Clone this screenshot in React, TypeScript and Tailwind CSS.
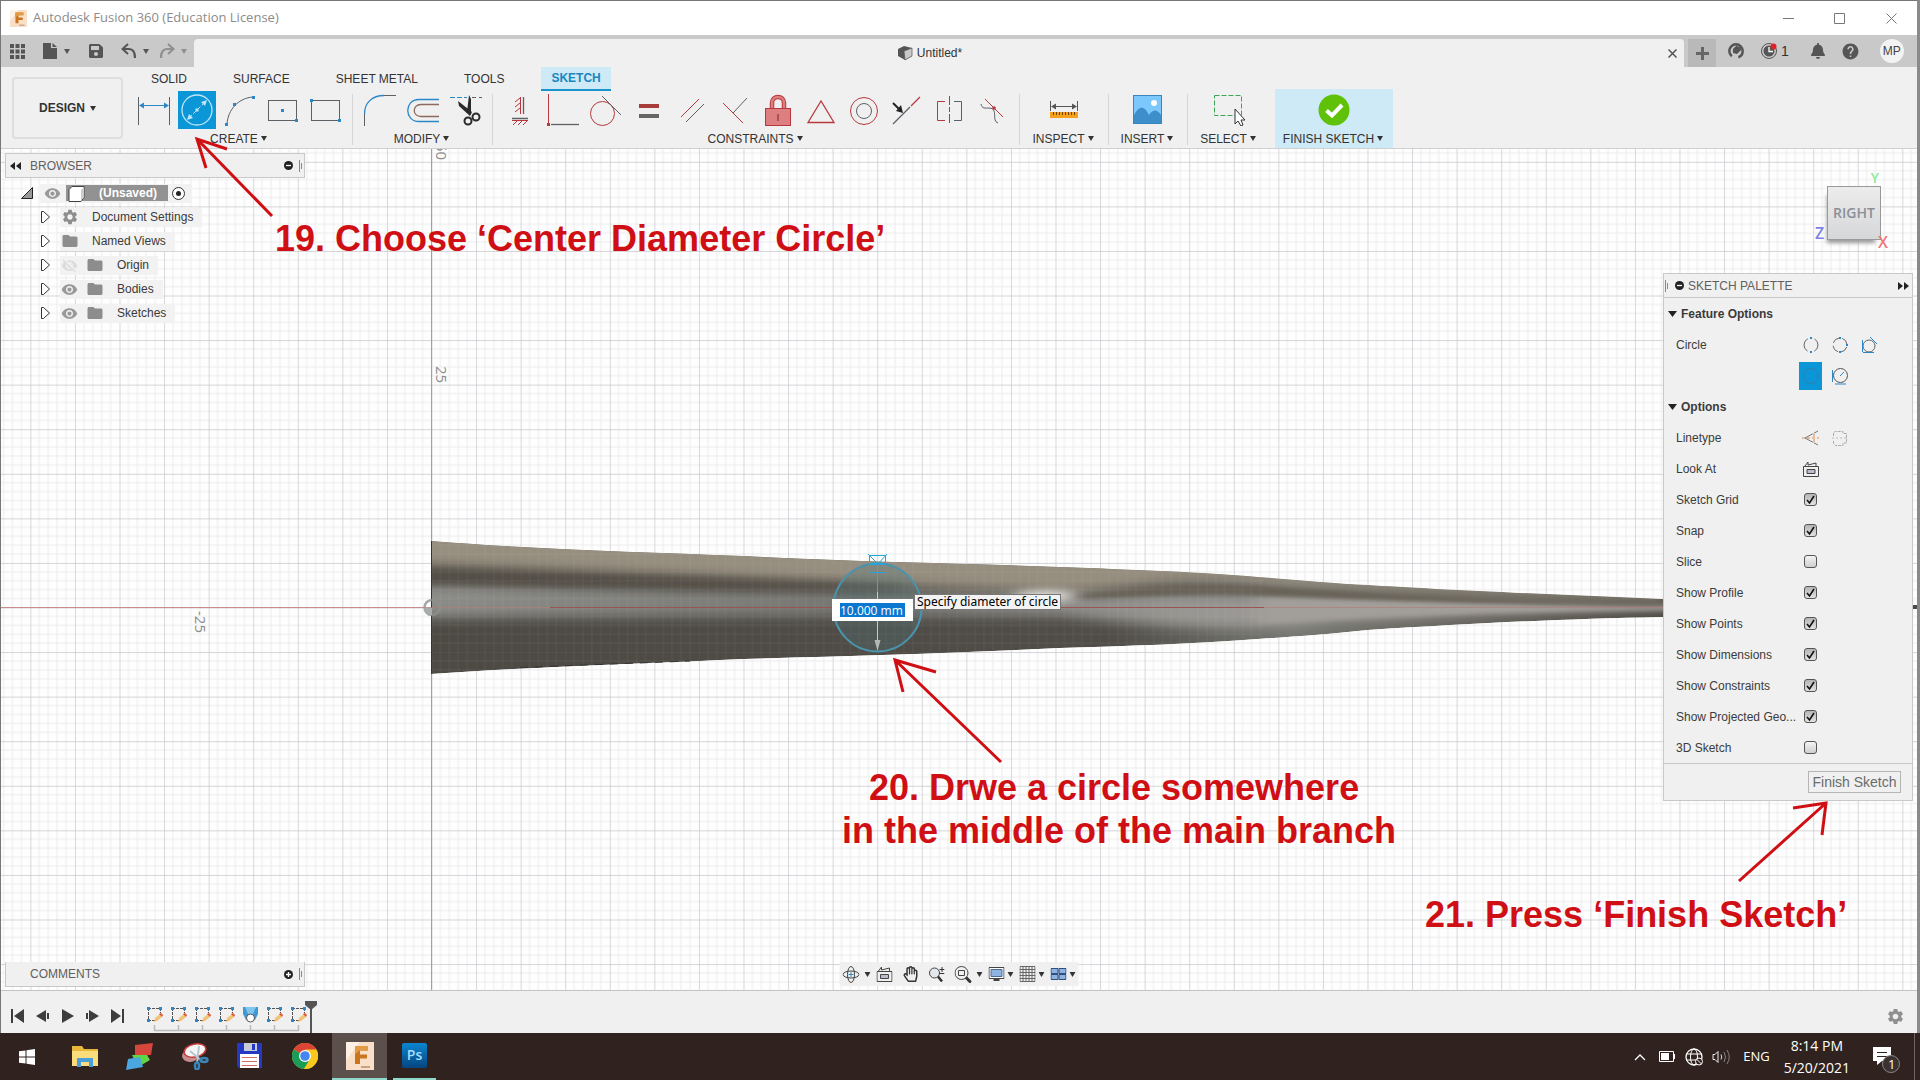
import type { ReactNode } from "react";
import { FaBell, FaRegHandPaper, FaSave } from "react-icons/fa";
import { MdFolder, MdHelp, MdReply, MdSettings, MdVisibility, MdVisibilityOff } from "react-icons/md";

const RED = "#b8383d";
const BLUE = "#2b87c8";
const GRAY = "#5c6166";

function Glyph({ children, size = 32, box = 32 }: { children: ReactNode; size?: number; box?: number }) {
  return (
    <svg width={size} height={size} viewBox={`0 0 ${box} ${box}`} fill="none" className="shrink-0">
      {children}
    </svg>
  );
}

function Caret({ className = "" }: { className?: string }) {
  return (
    <svg width="6" height="5" viewBox="0 0 6 5" className={`shrink-0 ${className}`}>
      <path d="M0 0h6L3 5z" fill="currentColor" />
    </svg>
  );
}

/* ---------- Ribbon ---------- */

const CREATE_TOOLS = [
  {
    name: "Sketch Dimension",
    icon: (
      <Glyph>
        <path d="M.5 3v28M31.5 3v28" stroke={GRAY} />
        <path d="M2 11.500h28" stroke={BLUE} />
        <path d="M1 11.500l5-3v6zM31 11.500l-5-3v6z" fill={BLUE} />
      </Glyph>
    ),
  },
  {
    name: "Center Diameter Circle",
    active: true,
    icon: (
      <Glyph>
        <circle cx="16" cy="16" r="15" stroke="#bfe6fa" strokeWidth="1.300" />
        <path d="M8 24L24 8" stroke="#bfe6fa" strokeDasharray="4 2" />
        <path d="M6 26l2-6 4 4zM26 6l-2 6-4-4z" fill="#bfe6fa" />
        <rect x="14.500" y="14.500" width="3" height="3" fill="#bfe6fa" />
      </Glyph>
    ),
  },
  {
    name: "3-Point Arc",
    icon: (
      <Glyph>
        <path d="M3 30C4 15 15 4 29 3" stroke={GRAY} />
        <path d="M1 29h3v3H1zM9 9h3v3H9zM28 2h3v3h-3z" fill={BLUE} />
      </Glyph>
    ),
  },
  {
    name: "Center Rectangle",
    icon: (
      <Glyph>
        <rect x="1.500" y="6.500" width="28" height="20" stroke={GRAY} />
        <path d="M14 15h3v3h-3zM28 25h3v3h-3z" fill={BLUE} />
      </Glyph>
    ),
  },
  {
    name: "2-Point Rectangle",
    icon: (
      <Glyph>
        <rect x="1.500" y="6.500" width="28" height="20" stroke={GRAY} />
        <path d="M0 5h3v3H0zM28 25h3v3h-3z" fill={BLUE} />
      </Glyph>
    ),
  },
];

const MODIFY_TOOLS = [
  {
    name: "Fillet",
    icon: (
      <Glyph>
        <path d="M.5 20v12M20 1.500h12" stroke={GRAY} />
        <path d="M.5 20C.5 9 8 1.500 20 1.500" stroke={BLUE} strokeWidth="1.300" />
      </Glyph>
    ),
  },
  {
    name: "Offset",
    icon: (
      <Glyph>
        <path d="M32 5.500H12C-3 5.500-3 27.500 12 27.500h20" stroke={BLUE} strokeWidth="1.300" />
        <path d="M32 10.500H14c-9 0-9 12 0 12h18" stroke="#8d6a5c" strokeWidth="1.300" />
      </Glyph>
    ),
  },
  {
    name: "Trim",
    icon: (
      <Glyph>
        <path d="M0 3.500h17" stroke={BLUE} strokeDasharray="5 2" />
        <path d="M22 3.500h4M29 3.500h3" stroke={GRAY} />
        <path d="M19 1l2 4v16l-4-3zM8 7l14 11-2 4L9 12z" fill="#2a2a2a" />
        <circle cx="18" cy="27" r="3.500" stroke="#2a2a2a" strokeWidth="2" />
        <circle cx="26" cy="23" r="3.500" stroke="#2a2a2a" strokeWidth="2" />
      </Glyph>
    ),
  },
];

const CONSTRAINT_TOOLS = [
  {
    name: "Horizontal/Vertical",
    icon: (
      <Glyph>
        <path d="M19.500 3v17M8 24.500h16" stroke={GRAY} strokeWidth="1.300" />
        <path d="M16.500 3v17M16 4l-5 4M16 9l-5 4M16 14l-5 4M8 26.500h16M13 27l-4 4M18 27l-4 4M23 27l-4 4" stroke={RED} />
      </Glyph>
    ),
  },
  {
    name: "Coincident",
    icon: (
      <Glyph>
        <path d="M1.500 0v30" stroke={RED} />
        <path d="M4 30.500h28" stroke={GRAY} strokeWidth="1.300" />
        <path d="M0 29h3v3H0z" fill={RED} />
      </Glyph>
    ),
  },
  {
    name: "Tangent",
    icon: (
      <Glyph>
        <circle cx="12.500" cy="19.500" r="12" stroke={RED} />
        <path d="M12 2l19 19" stroke={GRAY} />
      </Glyph>
    ),
  },
  {
    name: "Equal",
    icon: (
      <Glyph>
        <path d="M6 10h20v4H6z" fill="#a83c3a" />
        <path d="M6 20h20v4H6z" fill="#666" />
      </Glyph>
    ),
  },
  {
    name: "Parallel",
    icon: (
      <Glyph>
        <path d="M5 23L23 5" stroke={RED} />
        <path d="M10 28l18-18" stroke={GRAY} />
      </Glyph>
    ),
  },
  {
    name: "Perpendicular",
    icon: (
      <Glyph>
        <path d="M4 9l20 20" stroke={RED} />
        <path d="M14 19L28 4" stroke={GRAY} />
      </Glyph>
    ),
  },
  {
    name: "Fix/Unfix",
    icon: (
      <Glyph>
        <path d="M10 14V9c0-8 12-8 12 0v5" stroke="#b8383d" strokeWidth="4.500" />
        <path d="M10 14V9c0-8 12-8 12 0v5" stroke="#dd7f80" strokeWidth="2.500" />
        <rect x="3.500" y="14.500" width="25" height="17" fill="#dd7f80" stroke={RED} />
        <path d="M16 20v7" stroke="#7d2226" />
      </Glyph>
    ),
  },
  {
    name: "Midpoint",
    icon: (
      <Glyph>
        <path d="M16 7L3 28.500h26z" stroke={RED} strokeWidth="1.300" />
      </Glyph>
    ),
  },
  {
    name: "Concentric",
    icon: (
      <Glyph>
        <circle cx="16" cy="17" r="13.500" stroke={RED} />
        <circle cx="16" cy="17" r="7.500" stroke={GRAY} />
      </Glyph>
    ),
  },
  {
    name: "Collinear",
    icon: (
      <Glyph>
        <path d="M2 30l17-17" stroke={GRAY} strokeWidth="1.300" />
        <path d="M20 12l9-9" stroke={RED} strokeWidth="1.300" />
        <path d="M2 9l6 6" stroke="#222" strokeWidth="2" />
        <path d="M12 19l-2-8-5 6z" fill="#222" />
      </Glyph>
    ),
  },
  {
    name: "Symmetry",
    icon: (
      <Glyph>
        <path d="M11 7.500H3.500v19H11" stroke={RED} />
        <path d="M20 7.500h7.500v19H20" stroke={GRAY} />
        <path d="M15.500 2v29" stroke={RED} strokeDasharray="9 2 5 2" />
      </Glyph>
    ),
  },
  {
    name: "Curvature",
    icon: (
      <Glyph>
        <path d="M8 5l18 18" stroke={RED} />
        <path d="M4 10c1 5 4 4 8 4 10 0 2 13 9 15" stroke={GRAY} />
        <circle cx="17" cy="14" r="1.800" fill={RED} />
      </Glyph>
    ),
  },
];

type Tool = { name: string; icon: ReactNode; active?: boolean };

function ToolGroup({ label, tools }: { label: string; tools: Tool[] }) {
  return (
    <div className="flex flex-col items-center px-[5px]">
      <div className="flex h-[38px]">
        {tools.map((tool) => (
          <button key={tool.name} aria-label={tool.name} className="flex w-[43px] items-center justify-center">
            <span
              className={
                tool.active
                  ? "flex h-[38px] w-[38px] items-center justify-center bg-[#0a96d7]"
                  : "flex h-[38px] w-[38px] items-center justify-center"
              }
            >
              {tool.icon}
            </span>
          </button>
        ))}
      </div>
      <GroupLabel>{label}</GroupLabel>
    </div>
  );
}

function GroupLabel({ children }: { children: string }) {
  return (
    <button className="flex h-[19px] items-center gap-[3px] pr-[2px] whitespace-nowrap">
      {children}
      <Caret />
    </button>
  );
}

function SingleTool({ label, className, children }: { label: string; className: string; children: ReactNode }) {
  return (
    <div className={`flex flex-col items-center ${className}`}>
      <button aria-label={label} className="flex h-[38px] items-center">
        {children}
      </button>
      <GroupLabel>{label}</GroupLabel>
    </div>
  );
}

function Divider() {
  return <div className="mt-[3px] h-[51px] w-px bg-[#d6d6d6]" />;
}

function Ribbon() {
  return (
    <div className="flex h-[82px] shrink-0 border-b border-[#d0d0d0] bg-[#f0f0f0] pl-[11px] text-xs text-[#333]">
      <button className="mt-[10px] flex h-[62px] w-[111px] items-center justify-center gap-[5px] rounded border-2 border-[#dedede] font-bold">
        DESIGN
        <Caret />
      </button>
      <div className="flex flex-col">
        <div className="flex h-[25px] pl-[5px]">
          <button className="px-[23px]">SOLID</button>
          <button className="px-[23px]">SURFACE</button>
          <button className="px-[23px]">SHEET METAL</button>
          <button className="px-[23px]">TOOLS</button>
          <button className="mx-[14px] border-b-2 border-[#1a94cf] bg-[#cdeaf6] px-[10px] font-bold text-[#1a87c0]">SKETCH</button>
        </div>
        <div className="flex pl-1">
          <ToolGroup label="CREATE" tools={CREATE_TOOLS} />
          <Divider />
          <ToolGroup label="MODIFY" tools={MODIFY_TOOLS} />
          <Divider />
          <ToolGroup label="CONSTRAINTS" tools={CONSTRAINT_TOOLS} />
          <Divider />
          <SingleTool label="INSPECT" className="w-[88px]">
            <Glyph>
              <path d="M2.500 7v10M29.500 7v10M4 12.500h24" stroke="#555" />
              <path d="M3 12.500l5-3v6zM29 12.500l-5-3v6z" fill="#555" />
              <path d="M2 18h28v6H2z" fill="#f5a11c" />
              <path d="M5.500 18v3M8.500 18v3M11.500 18v3M14.500 18v3M17.500 18v3M20.500 18v3M23.500 18v3M26.500 18v3" stroke="#6b430a" />
            </Glyph>
          </SingleTool>
          <Divider />
          <SingleTool label="INSERT" className="w-[78px]">
            <Glyph>
              <rect x="1.500" y="1.500" width="28" height="28" fill="#7cc7fb" stroke="#3a87bf" />
              <path d="M2 21c6-11 11-8 15 0 4-6 8-6 12 0v8H2z" fill="#3c8fcb" />
              <circle cx="22" cy="9" r="3" fill="#fff" />
            </Glyph>
          </SingleTool>
          <Divider />
          <SingleTool label="SELECT" className="w-[82px]">
            <Glyph>
              <rect x="1.500" y="1.500" width="27" height="20" stroke="#3aa757" strokeDasharray="5 2" />
              <path d="M23 16v15l3-3 3 5 2-1-2-5h4z" fill="#fff" stroke="#333" transform="translate(-1 -1)" />
            </Glyph>
          </SingleTool>
          <SingleTool label="FINISH SKETCH" className="mx-[5px] -mt-[2px] h-[59px] w-[118px] bg-[#cdeaf6] pt-[2px]">
            <Glyph>
              <circle cx="16" cy="16" r="15.500" fill="#5fc108" />
              <path d="M8.500 16.500l5.500 5 10-10.500" stroke="#fff" strokeWidth="4" />
            </Glyph>
          </SingleTool>
        </div>
      </div>
    </div>
  );
}

/* ---------- Title bar and document tab ---------- */

function FusionLogo({ size }: { size: number }) {
  return (
    <Glyph size={size} box={28}>
      <path d="M0 0h28v28H0z" fill="#f9dfc8" />
      <path d="M0 0h14L0 18z" fill="#fdf1e6" />
      <path d="M9 4h13v4.500h-8v4h7v4h-7V22H9z" fill="#c9771f" />
      <path d="M9 4h13v4.500h-8L9 12z" fill="#e39a45" />
      <path d="M15 25h9" stroke="#c9a184" strokeWidth="2" />
    </Glyph>
  );
}

function TitleBar() {
  return (
    <div className="flex h-[35px] shrink-0 items-center border-t border-[#777] bg-white pl-[9px] font-['Open_Sans',sans-serif] text-[13px] text-[#8b8b8b]">
      <FusionLogo size={17} />
      <h1 className="ml-[6px] flex-1">Autodesk Fusion 360 (Education License)</h1>
      <div className="flex">
        <button aria-label="Minimize" className="flex w-[51px] justify-center">
          <Glyph size={11} box={11}>
            <path d="M0 5.500h11" stroke="#777" />
          </Glyph>
        </button>
        <button aria-label="Maximize" className="flex w-[51px] justify-center">
          <Glyph size={11} box={11}>
            <path d="M.5.5h10v10H.5z" stroke="#777" />
          </Glyph>
        </button>
        <button aria-label="Close" className="flex w-[52px] justify-center">
          <Glyph size={11} box={11}>
            <path d="M.5.5l10 10M10.500.5l-10 10" stroke="#777" />
          </Glyph>
        </button>
      </div>
    </div>
  );
}

function DocumentBar() {
  return (
    <div className="flex h-8 shrink-0 bg-[#c9c9c9] text-[#555]">
      <div className="flex w-[193px] items-center pl-[9px]">
        <button aria-label="Data panel">
          <Glyph size={15} box={15}>
            <path d="M0 0h4v4H0zM5.500 0h4v4h-4zM11 0h4v4h-4zM0 5.500h4v4H0zM5.500 5.500h4v4h-4zM11 5.500h4v4h-4zM0 11h4v4H0zM5.500 11h4v4h-4zM11 11h4v4h-4z" fill="currentColor" />
          </Glyph>
        </button>
        <button aria-label="File" className="ml-[18px] flex items-center gap-[7px]">
          <svg width="14" height="16" viewBox="0 0 14 16">
            <path d="M0 0h8v5h6v11H0zM9.500 0L14 4H9.500z" fill="currentColor" />
          </svg>
          <Caret />
        </button>
        <button aria-label="Save" className="ml-[18px]">
          <FaSave size={16} />
        </button>
        <button aria-label="Undo" className="ml-[17px] flex items-center gap-1">
          <Glyph size={16} box={16}>
            <path d="M2 6h6c4 0 6 3 6 9" stroke="currentColor" strokeWidth="2.200" />
            <path d="M7 1L1.500 6 7 11" stroke="currentColor" strokeWidth="2" />
          </Glyph>
          <Caret className="ml-[2px]" />
        </button>
        <button aria-label="Redo" className="ml-[10px] flex items-center gap-1 text-[#8f8f8f]">
          <Glyph size={16} box={16}>
            <path d="M14 6H8c-4 0-6 3-6 9" stroke="currentColor" strokeWidth="2.200" />
            <path d="M9 1l5.500 5L9 11" stroke="currentColor" strokeWidth="2" />
          </Glyph>
          <Caret className="ml-[2px]" />
        </button>
      </div>
      <div className="mt-1 flex flex-1 items-center rounded-t bg-[#f0f0f0] pr-1">
        <div className="flex flex-1 items-center justify-center gap-1 text-xs text-[#333]">
          <Glyph size={16} box={16}>
            <path d="M1 4l6-3 8 2v8l-7 4-7-4z" fill="#555" />
            <path d="M7 6l8-3v8l-7 4z" fill="#c9c9c9" stroke="#555" strokeWidth=".7" />
          </Glyph>
          Untitled*
        </div>
        <button aria-label="Close tab" className="p-[3px]">
          <Glyph size={9} box={9}>
            <path d="M.5.5l8 8M8.500.5l-8 8" stroke="#555" strokeWidth="1.500" />
          </Glyph>
        </button>
      </div>
      <div className="flex w-[233px] items-center">
        <button aria-label="New tab" className="mt-1 ml-1 flex h-7 w-7 items-center justify-center bg-[#b9b9b9]">
          <Glyph size={13} box={13}>
            <path d="M6.500 0v13M0 6.500h13" stroke="#666" strokeWidth="3" />
          </Glyph>
        </button>
        <button aria-label="Extensions" className="ml-3">
          <Glyph size={16} box={16}>
            <circle cx="8" cy="8" r="6.700" stroke="#555" strokeWidth="2.500" strokeDasharray="35 7" strokeDashoffset="27" />
            <path d="M5 6l4-4 1 2 2-1v2l2 1-5 5-4-1z" fill="#555" />
          </Glyph>
        </button>
        <button className="ml-[17px] flex items-center gap-1 text-sm text-[#333]">
          <Glyph size={16} box={16}>
            <circle cx="8" cy="8" r="7.500" stroke="#555" />
            <circle cx="8" cy="8" r="5.500" fill="#555" />
            <path d="M8 4v4.500h4" stroke="#fff" strokeWidth="1.300" />
            <circle cx="12.500" cy="3.500" r="3" fill="#df2027" />
          </Glyph>
          1
        </button>
        <button aria-label="Notifications" className="ml-[21px]">
          <FaBell size={16} />
        </button>
        <button aria-label="Help" className="ml-[15px]">
          <MdHelp size={19} />
        </button>
        <button className="ml-5 h-6 w-6 shrink-0 rounded-full bg-[#f3f3f3] text-center text-xs leading-6 text-[#444]">MP</button>
      </div>
    </div>
  );
}

/* ---------- Browser tree ---------- */

const TREE = [
  { label: "Document Settings", icon: "gear" },
  { label: "Named Views", icon: "folder" },
  { label: "Origin", icon: "folder", eye: "off" },
  { label: "Bodies", icon: "folder", eye: "on" },
  { label: "Sketches", icon: "folder", eye: "on" },
];

function RoundSign({ plus = false }: { plus?: boolean }) {
  return (
    <Glyph size={9} box={9}>
      <circle cx="4.500" cy="4.500" r="4.500" fill="#222" />
      <path d={plus ? "M2 4.500h5M4.500 2v5" : "M2 4.500h5"} stroke="#fff" strokeWidth="1.300" />
    </Glyph>
  );
}

function DragBars() {
  return (
    <svg width="3" height="12" className="shrink-0">
      <path d="M.5 0v12M2.500 3v6" stroke="#888" />
    </svg>
  );
}

function BrowserPanel() {
  return (
    <div className="w-[300px] text-xs text-[#3b3b3b]">
      <div className="flex h-[25px] items-center border border-[#c8c8c8] bg-[#f0f0f0] pr-[2px] pl-1 text-[#5f5f5f]">
        <svg width="11" height="8" viewBox="0 0 11 8">
          <path d="M5 0v8L0 4zM11 0v8L6 4z" fill="#222" />
        </svg>
        <h2 className="ml-[9px] flex-1">BROWSER</h2>
        <RoundSign />
        <span className="ml-[6px]">
          <DragBars />
        </span>
      </div>
      <ul className="pt-[3px]">
        <li className="flex h-6 items-center pl-4">
          <Glyph size={12} box={12}>
            <path d="M11.500.5v11H.5z" fill="#999" stroke="#222" />
          </Glyph>
          <div className="ml-[7px] flex h-[19px] items-center bg-[#f2f2f2] pr-[7px] pl-1">
            <MdVisibility size={17} className="text-[#999]" />
            <button className="ml-[5px] flex h-4 w-[102px] items-center bg-[#929292] pl-[2px] font-bold text-white">
              <Glyph size={17} box={17}>
                <path d="M1 4.500l3-3h12v11l-3 4H1z" fill="#fff" stroke="#444" />
                <path d="M13 5v11l3-4V2z" fill="#ccc" />
              </Glyph>
              <span className="ml-[14px]">(Unsaved)</span>
            </button>
            <span className="ml-1">
              <Glyph size={13} box={13}>
                <circle cx="6.500" cy="6.500" r="6" fill="#fff" stroke="#333" />
                <circle cx="6.500" cy="6.500" r="2.500" fill="#222" />
              </Glyph>
            </span>
          </div>
        </li>
        {TREE.map((node) => (
          <li key={node.label} className="flex h-6 items-center pl-9">
            <Glyph size={12} box={12}>
              <path d="M.5.5h2l6 5.500-6 5.500h-2z" fill="#fff" stroke="#333" />
            </Glyph>
            <button className="ml-[7px] flex h-[19px] items-center bg-[#f2f2f2] pr-[9px] pl-px">
              {node.eye && (
                <span className="mr-[8px] w-[17px]">
                  {node.eye === "on" ? (
                    <MdVisibility size={17} className="text-[#999]" />
                  ) : (
                    <MdVisibilityOff size={17} className="text-[#dcdcdc]" />
                  )}
                </span>
              )}
              {node.icon === "gear" ? (
                <MdSettings size={18} className="text-[#8d8d8d]" />
              ) : (
                <MdFolder size={18} className="text-[#8d8d8d]" />
              )}
              <span className="ml-[13px]">{node.label}</span>
            </button>
          </li>
        ))}
      </ul>
    </div>
  );
}

/* ---------- Sketch palette ---------- */

const OPTIONS = [
  { label: "Sketch Grid", on: true },
  { label: "Snap", on: true },
  { label: "Slice", on: false },
  { label: "Show Profile", on: true },
  { label: "Show Points", on: true },
  { label: "Show Dimensions", on: true },
  { label: "Show Constraints", on: true },
  { label: "Show Projected Geo...", on: true },
  { label: "3D Sketch", on: false },
];

function LookAtIcon() {
  return (
    <Glyph size={16} box={16}>
      <path d="M.5 5.500h15v10H.5zM2 5l3-4v3l8-2v3" stroke="#444" />
      <path d="M4 8.500h8v4H4z" fill="#b9bccb" stroke="#444" />
    </Glyph>
  );
}

function PaletteHeading({ children }: { children: string }) {
  return (
    <button className="flex h-[31px] items-center gap-1 pl-1 font-bold">
      <svg width="9" height="6">
        <path d="M0 0h9L4.500 6z" fill="#222" />
      </svg>
      {children}
    </button>
  );
}

function PaletteRow({ label, children }: { label?: string; children: ReactNode }) {
  return (
    <div className="flex h-[31px] items-center pl-3">
      <span className="w-[123px]">{label}</span>
      <div className="flex gap-[6px]">{children}</div>
    </div>
  );
}

function PaletteTool({ name, children }: { name: string; children: ReactNode }) {
  return (
    <button aria-label={name} className="flex w-[23px] justify-center">
      <Glyph size={18} box={18}>
        {children}
      </Glyph>
    </button>
  );
}

function SketchPalette() {
  return (
    <div className="flex w-[250px] flex-col border border-[#c8c8c8] bg-[#f0f0f0] text-xs text-[#3b3b3b]">
      <div className="flex h-6 items-center border-b border-[#c8c8c8] pr-[3px] pl-px text-[#5f5f5f]">
        <DragBars />
        <span className="ml-[7px]">
          <RoundSign />
        </span>
        <h2 className="ml-1 flex-1">SKETCH PALETTE</h2>
        <svg width="11" height="8" viewBox="0 0 11 8">
          <path d="M0 0v8l5-4zM6 0v8l5-4z" fill="#222" />
        </svg>
      </div>
      <PaletteHeading>Feature Options</PaletteHeading>
      <PaletteRow label="Circle">
        <PaletteTool name="2-Point Circle">
          <circle cx="9" cy="9" r="7" stroke="#666" strokeDasharray="15 7" strokeDashoffset="7.500" />
          <path d="M8 1h2v2H8zM8 15h2v2H8z" fill={BLUE} />
        </PaletteTool>
        <PaletteTool name="3-Point Circle">
          <circle cx="9" cy="9" r="7" stroke="#666" strokeDasharray="8 3" strokeDashoffset="-2" />
          <path d="M8 1h2v2H8zM8 15h2v2H8zM15 8h2v2h-2z" fill={BLUE} />
        </PaletteTool>
        <PaletteTool name="3-Tangent Circle">
          <circle cx="9" cy="10" r="6" stroke="#666" />
          <path d="M2.500 4v12M3 16.500h11M10 1l7 7" stroke={BLUE} />
        </PaletteTool>
      </PaletteRow>
      <PaletteRow>
        <button aria-label="Center Diameter" className="flex h-7 w-[23px] items-center justify-center bg-[#0a96d7]">
          <Glyph size={18} box={18}>
            <circle cx="9" cy="9" r="7.500" stroke="#2f7fae" />
          </Glyph>
        </button>
        <button aria-label="2-Tangent Circle" className="flex w-[23px] items-center justify-center">
          <Glyph size={18} box={18}>
            <circle cx="9.500" cy="8.500" r="7" stroke="#555" />
            <path d="M1.500 3v12M4 17h11M9 9l4-4" stroke={BLUE} />
          </Glyph>
        </button>
      </PaletteRow>
      <PaletteHeading>Options</PaletteHeading>
      <PaletteRow label="Linetype">
        <PaletteTool name="Construction">
          <path d="M3 9l13-7M3 9l13 7" stroke="#777" strokeDasharray="9 1" />
          <path d="M0 9h17M12 5v9" stroke="#e08a4c" strokeDasharray="3 2" />
        </PaletteTool>
        <PaletteTool name="Centerline">
          <path d="M2.500 7V3.500l2-1H12v2h3.500V14H12v2.500H4.500l-2-2V11" stroke="#aaa" strokeDasharray="3 1" />
          <path d="M1 9h16" stroke="#bbb" strokeDasharray="2 2" />
        </PaletteTool>
      </PaletteRow>
      <PaletteRow label="Look At">
        <button aria-label="Look At" className="flex w-[23px] justify-center">
          <LookAtIcon />
        </button>
      </PaletteRow>
      {OPTIONS.map((option) => (
        <label key={option.label} className="flex h-[31px] items-center pl-3">
          <span className="w-[128px] whitespace-nowrap">{option.label}</span>
          <span className="relative h-[13px] w-[13px]">
            <input
              type="checkbox"
              defaultChecked={option.on}
              className="peer block h-[13px] w-[13px] appearance-none rounded-[3px] border border-[#555] bg-linear-to-b from-[#f4f4f4] to-[#cfcfcf] checked:from-[#b5b5b5] checked:to-[#e2e2e2]"
            />
            <svg viewBox="0 0 13 13" className="pointer-events-none absolute inset-0 hidden h-[13px] w-[13px] peer-checked:block">
              <path d="M3 7l2.500 3L10 3" stroke="#111" strokeWidth="1.600" fill="none" />
            </svg>
          </span>
        </label>
      ))}
      <div className="flex h-[37px] items-center justify-end border-t border-[#c8c8c8] pr-[11px]">
        <button className="h-[22px] w-[93px] border border-[#b5b5b5] text-sm leading-5 text-[#6b6b6b]">Finish Sketch</button>
      </div>
    </div>
  );
}

/* ---------- Canvas ---------- */

const BODY =
  "M431 541C530 549 640 552 744 556C860 562 960 563 1060 567C1140 570 1200 572 1258 577C1300 580 1330 583 1368 585C1430 589 1560 595 1663 599L1918 605V609L1663 617C1560 619 1480 623 1368 630C1330 634 1290 637 1258 639C1190 644 1130 646 1060 648C960 653 850 656 744 659C640 664 530 667 431 674Z";

// The drawing keeps window coordinates; the group shifts them into the canvas area.
function Viewport() {
  return (
    <svg className="absolute inset-0 h-full w-full bg-[#fefefe]" fill="none">
      <defs>
        <pattern id="grid" x="431.500" y="607.500" width="44.570" height="44.570" patternUnits="userSpaceOnUse">
          <path
            d="M8.900 0v44.600M17.800 0v44.600M26.700 0v44.600M35.700 0v44.600M0 8.900h44.600M0 17.800h44.600M0 26.700h44.600M0 35.700h44.600"
            stroke="#ececec"
          />
          <path d="M0 0h44.570M0 0v44.570" stroke="#c6c8cc" strokeWidth="1.400" />
        </pattern>
        <clipPath id="body">
          <path d={BODY} />
        </clipPath>
        <linearGradient id="base" x1="431" x2="1663" y1="0" y2="0" gradientUnits="userSpaceOnUse">
          <stop offset="0" stopColor="#4d4a44" />
          <stop offset=".55" stopColor="#504d48" />
          <stop offset=".7" stopColor="#777873" />
          <stop offset=".8" stopColor="#6b6a63" />
          <stop offset="1" stopColor="#4c4a44" />
        </linearGradient>
        <linearGradient id="light" x1="431" x2="1663" y1="0" y2="0" gradientUnits="userSpaceOnUse">
          <stop offset="0" stopColor="#8b8b87" />
          <stop offset=".35" stopColor="#777773" />
          <stop offset=".6" stopColor="#969591" />
          <stop offset=".8" stopColor="#a5a09d" />
          <stop offset="1" stopColor="#8e8580" />
        </linearGradient>
        <filter id="blur6" x="-20%" y="-60%" width="140%" height="220%">
          <feGaussianBlur stdDeviation="6 6" />
        </filter>
        <filter id="blur4" x="-20%" y="-80%" width="140%" height="260%">
          <feGaussianBlur stdDeviation="8 4" />
        </filter>
        <filter id="blur2" x="-20%" y="-80%" width="140%" height="260%">
          <feGaussianBlur stdDeviation="8 2" />
        </filter>
      </defs>
      <g transform="translate(-1 -149)">
        <rect x="1" y="149" width="100%" height="100%" fill="url(#grid)" />
        <path d="M1 607.500h430" stroke="#c98b8b" />
        <g clipPath="url(#body)">
          <path d={BODY} fill="url(#base)" />
          <path
            d="M400 582C600 586 800 592 960 592C1060 592 1160 592 1258 597C1360 599 1500 604 1700 607V609C1500 612 1400 617 1340 620C1240 634 1160 626 1060 616C880 616 600 617 400 618Z"
            fill="url(#light)"
            filter="url(#blur6)"
          />
          <path
            d="M1258 597C1360 599 1500 604 1700 606V610C1500 612 1400 615 1258 624Z"
            fill="#a29e9a"
            filter="url(#blur2)"
          />
          <path
            d="M400 520L1663 590V600C1500 594 1360 588 1258 583C1160 576 1120 592 1060 592C900 586 640 572 400 565Z"
            fill="#968e7f"
            filter="url(#blur6)"
          />
          <path d="M400 571C600 579 740 579 900 586V591C740 589 600 588 400 582Z" fill="#524d44" filter="url(#blur4)" />
          <path
            d="M1050 597C1120 592 1160 582 1258 586C1360 592 1500 601 1663 604V606C1500 604 1360 600 1258 595C1180 591 1120 600 1050 599Z"
            fill="#676257"
            filter="url(#blur2)"
          />
          <ellipse cx="1045" cy="596" rx="32" ry="5" fill="#f5f3f1" filter="url(#blur4)" />
          <rect x="431" y="530" width="833" height="150" fill="url(#grid)" opacity=".07" />
        </g>
        <path d="M520 667.500L690 661" stroke="#333" strokeDasharray="8 7" />
        <path d="M431 607.500h119M1264 607.500h399" stroke="#b07f7c" opacity=".7" />
        <path d="M550 607.500h714" stroke="#9b5452" />
        <path d="M431.500 149v392M431.500 674v316" stroke="#6fc275" />
        <path d="M431.500 541v133" stroke="#23402a" />
        <circle cx="432" cy="607.500" r="7.500" stroke="#8d918f" strokeWidth="2.500" opacity=".8" />
        <path d="M432 607.500v7.500a7.500 7.500 0 0 1-7.500-7.500z" fill="#a9adab" />

        {/* circle being placed */}
        <circle cx="877.500" cy="607.500" r="44" fill="#4f7378" fillOpacity=".3" stroke="#4a93ac" strokeWidth="2" />
        <path d="M877.500 572v78" stroke="#c4c9ca" />
        <path d="M877.500 564v28" stroke="#35a9da" />
        <path d="M877.500 651l-3-11h6z" fill="#b3b8b9" />
        <path d="M869.500 555.500h16v8h-16zM869.500 564.500h16v8h-16zM868 554l10 10 9-10" stroke="#27a5db" />

        <g fill="#8c8c8c" fontSize="15" fontFamily="Open Sans, sans-serif">
          <text transform="translate(436 366) rotate(90)">25</text>
          <text transform="translate(436 143) rotate(90)">50</text>
          <text transform="translate(195 611) rotate(90)">-25</text>
        </g>
      </g>
    </svg>
  );
}

function ViewCube() {
  return (
    <div className="relative mt-[33px] mr-[32px] font-['Open_Sans',sans-serif] font-semibold">
      <div className="flex h-[54px] w-[54px] items-center justify-center border border-[#999] bg-linear-to-b from-[#ececec] to-[#d6d7d9] text-sm text-[#8b8f96] shadow-[-3px_6px_4px_-3px_#999999]">
        RIGHT
      </div>
      <span className="absolute -top-[18px] right-[2px] text-sm text-[#90e89a]">Y</span>
      <span className="absolute -bottom-[5px] -left-3 text-base text-[#8080e8]">Z</span>
      <span className="absolute -right-[7px] -bottom-[14px] text-base text-[#ee7878]">X</span>
    </div>
  );
}

function NavigationBar() {
  return (
    <div className="absolute bottom-1 left-1/2 flex h-6 -translate-x-1/2 items-center bg-[#f0f0f0] px-[3px] text-[#333]">
      <button aria-label="Orbit" className="flex items-center gap-[5px]">
        <Glyph size={17} box={17}>
          <ellipse cx="8.500" cy="8.500" rx="8" ry="3.500" stroke="#444" />
          <ellipse cx="8.500" cy="8.500" rx="3.500" ry="8" stroke="#444" />
          <path d="M6 8.500h5M8.500 6v5" stroke={BLUE} />
        </Glyph>
        <Caret />
      </button>
      <button aria-label="Look At" className="ml-[6px]">
        <LookAtIcon />
      </button>
      <button aria-label="Pan" className="ml-[10px]">
        <FaRegHandPaper size={16} />
      </button>
      <button aria-label="Zoom" className="ml-[10px]">
        <Glyph size={16} box={16}>
          <circle cx="6" cy="7" r="5" stroke="#444" fill="#e4e8ee" />
          <path d="M9.500 10.500l4 5" stroke="#333" strokeWidth="2.500" />
          <path d="M11 3.500h5M13.500 1v5M11 7.500h5" stroke="#333" />
        </Glyph>
      </button>
      <button aria-label="Fit" className="ml-[10px] flex items-center gap-[5px]">
        <Glyph size={17} box={17}>
          <circle cx="7" cy="7" r="6.500" stroke="#444" />
          <path d="M4 4.500h6v5H4z" stroke="#444" />
          <path d="M11.500 11.500l5 5" stroke="#333" strokeWidth="3" />
        </Glyph>
        <Caret />
      </button>
      <button aria-label="Display Settings" className="ml-[6px] flex items-center gap-[3px]">
        <Glyph size={16} box={16}>
          <path d="M.5 1.500h15v11H.5z" fill="#fff" stroke="#444" />
          <path d="M2.500 3.500h11v7h-11z" fill="#8fb3e0" stroke="#4a6a9c" />
          <path d="M5 15h6v-2H5z" fill="#444" />
        </Glyph>
        <Caret />
      </button>
      <button aria-label="Grid and Snaps" className="ml-[6px] flex items-center gap-[3px]">
        <Glyph size={16} box={16}>
          <path d="M.5.5h15v15H.5zM3.500 0v16M6.500 0v16M9.500 0v16M12.500 0v16M0 3.500h16M0 6.500h16M0 9.500h16M0 12.500h16" stroke="#666" />
        </Glyph>
        <Caret />
      </button>
      <button aria-label="Viewports" className="ml-[6px] flex items-center gap-[3px]">
        <Glyph size={16} box={16}>
          <path d="M.5 2.500h7v5h-7zM8.500 2.500h7v5h-7zM.5 8.500h7v5h-7zM8.500 8.500h7v5h-7z" fill="#8fb3e0" stroke="#2f4f80" />
        </Glyph>
        <Caret />
      </button>
    </div>
  );
}

function Canvas() {
  return (
    <main className="relative flex flex-1 justify-between overflow-hidden">
      <Viewport />
      <div className="relative flex flex-col justify-between pt-1 pb-[3px] pl-1">
        <BrowserPanel />
        <div className="flex h-[25px] w-[300px] items-center border border-t-0 border-[#c8c8c8] bg-[#f0f0f0] pr-[2px] pl-6 text-xs text-[#5f5f5f]">
          <h2 className="flex-1">COMMENTS</h2>
          <RoundSign plus />
          <span className="ml-[6px]">
            <DragBars />
          </span>
        </div>
      </div>
      <div className="relative flex flex-col items-end gap-[33px] pt-1 pr-1">
        <ViewCube />
        <SketchPalette />
      </div>
      <NavigationBar />

      <input
        aria-label="Diameter"
        readOnly
        defaultValue="10.000 mm"
        className="absolute top-[450px] left-[831px] h-[22px] w-[81px] border-x-8 border-y-4 border-white bg-[#0a78d0] font-['Open_Sans',sans-serif] text-xs text-white"
      />
      <div className="absolute top-[445px] left-[913px] flex h-4 items-center border border-[#777] bg-[#f3f3f3] px-[2px] font-['Noto_Sans',sans-serif] text-xs whitespace-nowrap text-black">
        Specify diameter of circle
      </div>
    </main>
  );
}

/* ---------- Timeline ---------- */

const HISTORY = ["sketch", "sketch", "sketch", "sketch", "loft", "sketch", "sketch"];

const PLAYBACK = [
  { name: "Go to start", d: "M0 1h2v14H0zM13 1v14L3 8z" },
  { name: "Step back", d: "M10 2v12L0 8zM11 5h2v6h-2z" },
  { name: "Play", d: "M1 1v14l12-7z" },
  { name: "Step forward", d: "M3 2v12l10-6zM0 5h2v6H0z" },
  { name: "Go to end", d: "M11 1h2v14h-2zM0 1v14l10-7z" },
];

function Timeline() {
  return (
    <div className="flex h-[43px] shrink-0 border-t border-[#c4c4c4] bg-[#f0f0f0]">
      <div className="flex items-center gap-3 pt-2 pl-[10px]">
        {PLAYBACK.map((control) => (
          <button key={control.name} aria-label={control.name}>
            <svg width="13" height="16" viewBox="0 0 13 16">
              <path d={control.d} fill="#3d3d3d" />
            </svg>
          </button>
        ))}
      </div>
      <div className="ml-[18px] flex">
        {HISTORY.map((kind, i) => (
          <button key={i} aria-label={kind} className="flex w-6 flex-col items-center pt-[15px]">
            <Glyph size={17} box={17}>
              {kind === "sketch" ? (
                <>
                  <path d="M2 2.500h13M2.500 2v13M2 14.500h8M14.500 2v5" stroke="#555" strokeDasharray="3 1" />
                  <path d="M1 1h3v3H1zM13 1h3v3h-3zM1 13h3v3H1z" fill={BLUE} />
                  <path d="M8 16l1-4 5-4 2 3-5 4z" fill="#f2c377" />
                  <path d="M13 8l2-1 2 2-1 2z" fill="#df5338" />
                </>
              ) : (
                <>
                  <path d="M1 1h15v7l-3 6H4L1 8z" fill="#3f9ad3" />
                  <path d="M3 1h11l-3 7H6z" fill="#80c6ee" />
                  <circle cx="8.500" cy="12" r="4" fill="#fff" stroke="#555" />
                </>
              )}
            </Glyph>
            <svg width="24" height="7" viewBox="0 0 24 7" className="mt-[2px]">
              <path d="M12.500 0v6" stroke="#bbb" strokeWidth="1.500" />
              <path d={i === 0 ? "M12 5.500h12" : i === HISTORY.length - 1 ? "M0 5.500h13" : "M0 5.500h24"} stroke="#bbb" strokeWidth="1.500" />
            </svg>
          </button>
        ))}
        <svg width="12" height="32" viewBox="0 0 12 32" className="mt-[10px] -ml-[5px]">
          <path d="M0 0h12v4L6 9 0 4z" fill="#555" />
          <path d="M6 5v27" stroke="#555" strokeWidth="2" />
        </svg>
      </div>
      <button aria-label="Timeline settings" className="mr-[12px] ml-auto pt-2 text-[#8f8f8f]">
        <MdSettings size={19} />
      </button>
    </div>
  );
}

/* ---------- Windows taskbar ---------- */

function TaskButton({ name, children, state = "border-transparent" }: { name: string; children: ReactNode; state?: string }) {
  return (
    <button aria-label={name} className={`flex w-[55px] items-center justify-center border-b-2 ${state}`}>
      {children}
    </button>
  );
}

function Taskbar() {
  return (
    <footer className="flex h-[47px] shrink-0 bg-[#30221e] font-['Open_Sans',sans-serif] text-white">
      <button aria-label="Start" className="flex w-[57px] items-center justify-center pr-1">
        <Glyph size={16} box={16}>
          <path d="M0 2.300L6.500 1.400V7.500H0zM7.500 1.200L16 0v7.500H7.500zM0 8.500h6.500v6.100L0 13.700zM7.500 8.500H16V16l-8.500-1.200z" fill="#fff" />
        </Glyph>
      </button>
      <TaskButton name="File Explorer">
        <Glyph size={26} box={26}>
          <path d="M0 3h10l2 3h14v17H0z" fill="#e8b63a" />
          <path d="M0 8h26v15H0z" fill="#fbdc7c" />
          <path d="M5 24v-9h16v9h-4v-5H9v5z" fill="#4a9fd8" />
        </Glyph>
      </TaskButton>
      <TaskButton name="Cards">
        <Glyph size={28} box={28}>
          <path d="M9 3l18-2-2 12-16 1z" fill="#d4473a" />
          <path d="M6 13l15 0 3 5-12 7z" fill="#5fd548" />
          <path d="M2 17l12-2 3 10-17 3z" fill="#4aa7e0" />
        </Glyph>
      </TaskButton>
      <TaskButton name="Snipping Tool">
        <Glyph size={28} box={28}>
          <ellipse cx="9" cy="14" rx="8" ry="6" fill="#c58d8d" />
          <ellipse cx="14" cy="8.500" rx="11" ry="6.500" fill="#f6f6f6" stroke="#c93b3b" strokeWidth="1.500" transform="rotate(-12 14 8.500)" />
          <path d="M9 9l12 10M18 4l-2 17" stroke="#b9c5cf" strokeWidth="2" />
          <ellipse cx="16" cy="24" rx="2" ry="3.500" stroke="#3b86b8" strokeWidth="2.500" />
          <ellipse cx="23" cy="18" rx="3.500" ry="2" stroke="#3b86b8" strokeWidth="2.500" />
        </Glyph>
      </TaskButton>
      <TaskButton name="Total Commander">
        <Glyph size={27} box={27}>
          <path d="M1 1h25v25H3l-2-2z" fill="#2438c4" />
          <path d="M8 1h13v8H8z" fill="#c6cbd6" />
          <path d="M16 2h3v6h-3z" fill="#2438c4" />
          <path d="M4 12h19v14H4z" fill="#fff" />
          <path d="M6 15.500h15M6 19.500h15M6 23.500h15" stroke="#d56a6a" />
        </Glyph>
      </TaskButton>
      <TaskButton name="Chrome">
        <Glyph size={26} box={26}>
          <circle cx="13" cy="13" r="13" fill="#f8c81c" />
          <path d="M13 13L1.700 6.500A13 13 0 0 1 24.300 6.500z" fill="#dc4437" />
          <path d="M1.700 6.500A13 13 0 0 0 12 26l6-10-5-3z" fill="#1a9c58" />
          <path d="M13 6.500h11.300A13 13 0 0 1 12 26l6.500-10z" fill="#f8c81c" />
          <circle cx="13" cy="13" r="6" fill="#fff" />
          <circle cx="13" cy="13" r="4.800" fill="#4485f0" />
        </Glyph>
      </TaskButton>
      <TaskButton name="Fusion 360" state="border-[#8fd8cc] bg-[#5b504c]">
        <FusionLogo size={28} />
      </TaskButton>
      <button className="relative flex w-[55px] items-center justify-center pb-[3px]">
        <span className="flex h-[25px] w-[25px] items-center justify-center rounded-xs bg-linear-to-b from-[#0b86d2] to-[#064680] text-sm font-semibold text-[#a9dcfb]">
          Ps
        </span>
        <span className="absolute inset-x-[6px] bottom-0 h-[2px] bg-[#8fd8cc]" />
      </button>

      <div className="ml-auto flex items-center">
        <button aria-label="Hidden icons">
          <Glyph size={12} box={12}>
            <path d="M1 9l5-5 5 5" stroke="#fff" strokeWidth="1.300" />
          </Glyph>
        </button>
        <svg width="17" height="11" viewBox="0 0 17 11" className="ml-[13px]" fill="none">
          <path d="M.5.5h14v10H.5zM15.500 3v5" stroke="#fff" />
          <path d="M2 2h8v7H2z" fill="#fff" />
        </svg>
        <span className="ml-[9px]">
          <Glyph size={18} box={18}>
            <circle cx="9" cy="9" r="8" stroke="#fff" strokeWidth="1.300" />
            <ellipse cx="9" cy="9" rx="3.500" ry="8" stroke="#fff" />
            <path d="M1 6h16M1 12h16" stroke="#fff" />
            <circle cx="14" cy="13.500" r="3.500" fill="#30221e" stroke="#fff" />
            <path d="M11.500 11l5 5" stroke="#fff" />
          </Glyph>
        </span>
        <span className="ml-[9px]">
          <Glyph size={18} box={18}>
            <path d="M1 6.500h2l3-3v11l-3-3H1z" stroke="#eee" />
            <path d="M9 6.500q1.500 2.500 0 5" stroke="#ddd" />
            <path d="M12 4q3 5 0 10M15 2q4.500 7 0 14" stroke="#88807d" />
          </Glyph>
        </span>
        <span className="ml-[13px] text-[13px]">ENG</span>
        <div className="ml-[14px] text-center text-sm leading-[22px]">
          <div>8:14 PM</div>
          <div>5/20/2021</div>
        </div>
        <button aria-label="1 notification" className="mr-[14px] ml-[22px] pt-[7px]">
          <Glyph size={28} box={28}>
            <path d="M1 1h18v14H10l-5 4v-4H1z" fill="#fff" />
            <path d="M5 6.500h10M5 10.500h10" stroke="#30221e" />
            <circle cx="19" cy="18" r="8.500" fill="#3a3230" stroke="#8b8583" />
            <text x="16" y="23" fontSize="13" fill="#fff">
              1
            </text>
          </Glyph>
        </button>
        <div className="mr-[5px] h-[47px] w-px bg-[#6d6461]" />
      </div>
    </footer>
  );
}

/* ---------- Tutorial notes ---------- */

function Notes() {
  return (
    <div className="pointer-events-none absolute inset-0 text-4xl font-bold whitespace-nowrap text-[#cf0f14]">
      <svg className="absolute inset-0 h-full w-full" fill="none" stroke="#cf0f14" strokeWidth="3">
        <path d="M272 216L197 139M227 149L197 139l9 29" />
        <path d="M1001 762L895 660M936 672l-41-12 8 32" />
        <path d="M1739 881l87-78M1793 808l33-5-4 32" />
      </svg>
      <p className="absolute top-[217px] left-[275px] leading-[43px]">19. Choose ‘Center Diameter Circle’</p>
      <p className="absolute top-[766px] left-[842px] text-center leading-[43px]">
        <span className="pr-[10px]">20. Drwe a circle somewhere</span>
        <br />
        in the middle of the main branch
      </p>
      <p className="absolute top-[893px] left-[1425px] leading-[43px]">21. Press ‘Finish Sketch’</p>
    </div>
  );
}

export default function App() {
  return (
    <div className="relative flex h-screen min-h-[900px] flex-col overflow-hidden bg-[#30221e] font-['Liberation_Sans',Arial,sans-serif]">
      <div className="flex flex-1 flex-col border-r-3 border-l border-r-[#8a8a8a] border-l-[#777]">
        <TitleBar />
        <DocumentBar />
        <Ribbon />
        <Canvas />
        <Timeline />
      </div>
      <Taskbar />
      <Notes />
    </div>
  );
}
